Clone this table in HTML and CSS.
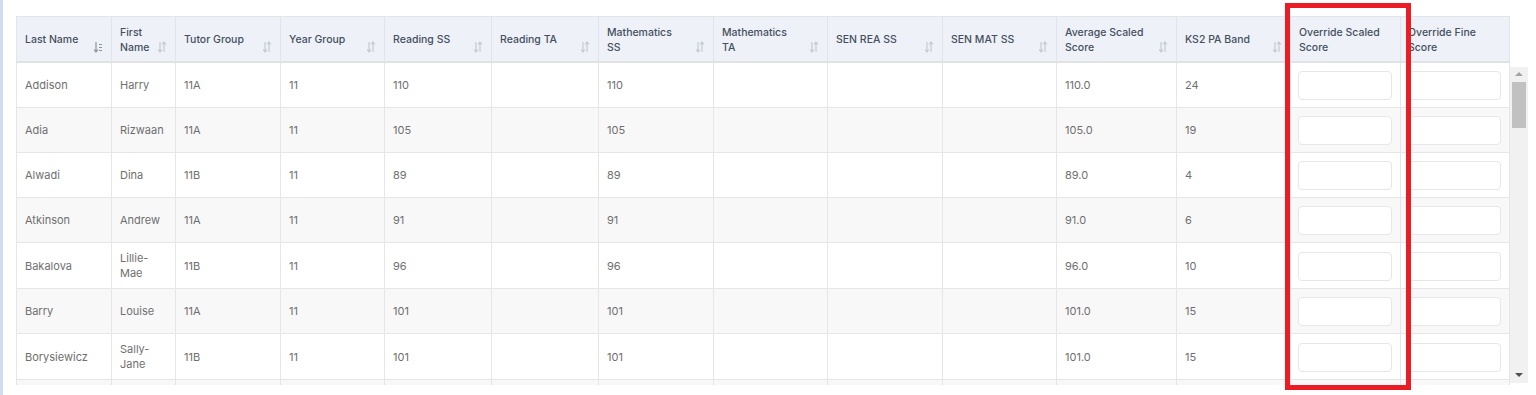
FILE: index.html
```html
<!DOCTYPE html>
<html lang="en">
<head>
<meta charset="utf-8">
<title>KS2 Scores</title>
<link rel="stylesheet" href="styles.css">
</head>
<body>
<div class="page">
  <div class="grid">
    <div class="head-row">
      <table class="tbl head">
        <colgroup>
          <col class="c-last"><col class="c-first"><col class="c-tutor"><col class="c-year"><col class="c-rss"><col class="c-rta"><col class="c-mss"><col class="c-mta"><col class="c-srea"><col class="c-smat"><col class="c-avg"><col class="c-band"><col class="c-ovs"><col class="c-ovf">
        </colgroup>
        <thead>
          <tr>
            <th><div class="th-in"><span>Last Name</span><svg class="sort" width="10" height="12" viewBox="0 0 10 12"><path d="M3 1v10M1 8.5l2 2.5 2-2.5" fill="none" stroke="#8e939b" stroke-width="1.2"/><path d="M6 3.5h3M6 6.5h3M6 9.5h3" fill="none" stroke="#8e939b" stroke-width="1.1"/></svg></div></th>
            <th><div class="th-in"><span>First Name</span><svg class="sort" width="10" height="12" viewBox="0 0 10 12"><path d="M3 1v10M1 8.5l2 2.5 2-2.5M7 11V1M5 3.5L7 1l2 2.5" fill="none" stroke="#c6cad1" stroke-width="1.2"/></svg></div></th>
            <th><div class="th-in"><span>Tutor Group</span><svg class="sort" width="10" height="12" viewBox="0 0 10 12"><path d="M3 1v10M1 8.5l2 2.5 2-2.5M7 11V1M5 3.5L7 1l2 2.5" fill="none" stroke="#c6cad1" stroke-width="1.2"/></svg></div></th>
            <th><div class="th-in"><span>Year Group</span><svg class="sort" width="10" height="12" viewBox="0 0 10 12"><path d="M3 1v10M1 8.5l2 2.5 2-2.5M7 11V1M5 3.5L7 1l2 2.5" fill="none" stroke="#c6cad1" stroke-width="1.2"/></svg></div></th>
            <th><div class="th-in"><span>Reading SS</span><svg class="sort" width="10" height="12" viewBox="0 0 10 12"><path d="M3 1v10M1 8.5l2 2.5 2-2.5M7 11V1M5 3.5L7 1l2 2.5" fill="none" stroke="#c6cad1" stroke-width="1.2"/></svg></div></th>
            <th><div class="th-in"><span>Reading TA</span><svg class="sort" width="10" height="12" viewBox="0 0 10 12"><path d="M3 1v10M1 8.5l2 2.5 2-2.5M7 11V1M5 3.5L7 1l2 2.5" fill="none" stroke="#c6cad1" stroke-width="1.2"/></svg></div></th>
            <th><div class="th-in"><span>Mathematics SS</span><svg class="sort" width="10" height="12" viewBox="0 0 10 12"><path d="M3 1v10M1 8.5l2 2.5 2-2.5M7 11V1M5 3.5L7 1l2 2.5" fill="none" stroke="#c6cad1" stroke-width="1.2"/></svg></div></th>
            <th><div class="th-in"><span>Mathematics TA</span><svg class="sort" width="10" height="12" viewBox="0 0 10 12"><path d="M3 1v10M1 8.5l2 2.5 2-2.5M7 11V1M5 3.5L7 1l2 2.5" fill="none" stroke="#c6cad1" stroke-width="1.2"/></svg></div></th>
            <th><div class="th-in"><span>SEN REA SS</span><svg class="sort" width="10" height="12" viewBox="0 0 10 12"><path d="M3 1v10M1 8.5l2 2.5 2-2.5M7 11V1M5 3.5L7 1l2 2.5" fill="none" stroke="#c6cad1" stroke-width="1.2"/></svg></div></th>
            <th><div class="th-in"><span>SEN MAT SS</span><svg class="sort" width="10" height="12" viewBox="0 0 10 12"><path d="M3 1v10M1 8.5l2 2.5 2-2.5M7 11V1M5 3.5L7 1l2 2.5" fill="none" stroke="#c6cad1" stroke-width="1.2"/></svg></div></th>
            <th><div class="th-in"><span>Average Scaled Score</span><svg class="sort" width="10" height="12" viewBox="0 0 10 12"><path d="M3 1v10M1 8.5l2 2.5 2-2.5M7 11V1M5 3.5L7 1l2 2.5" fill="none" stroke="#c6cad1" stroke-width="1.2"/></svg></div></th>
            <th><div class="th-in"><span>KS2 PA Band</span><svg class="sort" width="10" height="12" viewBox="0 0 10 12"><path d="M3 1v10M1 8.5l2 2.5 2-2.5M7 11V1M5 3.5L7 1l2 2.5" fill="none" stroke="#c6cad1" stroke-width="1.2"/></svg></div></th>
            <th class="th-ovs"><div class="th-in"><span>Override Scaled Score</span></div></th>
            <th class="th-ovf"><div class="th-in"><span>Override Fine Score</span></div></th>
          </tr>
        </thead>
      </table>
      <div class="head-gap"></div>
    </div>

    <div class="body-row">
      <div class="body-clip">
        <table class="tbl body">
          <colgroup>
            <col class="c-last"><col class="c-first"><col class="c-tutor"><col class="c-year"><col class="c-rss"><col class="c-rta"><col class="c-mss"><col class="c-mta"><col class="c-srea"><col class="c-smat"><col class="c-avg"><col class="c-band"><col class="c-ovs"><col class="c-ovf">
          </colgroup>
          <tbody>
            <tr>
              <td>Addison</td><td>Harry</td><td>11A</td><td>11</td><td>110</td><td></td><td>110</td><td></td><td></td><td></td><td>110.0</td><td>24</td>
              <td class="td-in"><input class="score-input" type="text"></td><td class="td-in td-ovf"><input class="score-input" type="text"></td>
            </tr>
            <tr>
              <td>Adia</td><td>Rizwaan</td><td>11A</td><td>11</td><td>105</td><td></td><td>105</td><td></td><td></td><td></td><td>105.0</td><td>19</td>
              <td class="td-in"><input class="score-input" type="text"></td><td class="td-in td-ovf"><input class="score-input" type="text"></td>
            </tr>
            <tr>
              <td>Alwadi</td><td>Dina</td><td>11B</td><td>11</td><td>89</td><td></td><td>89</td><td></td><td></td><td></td><td>89.0</td><td>4</td>
              <td class="td-in"><input class="score-input" type="text"></td><td class="td-in td-ovf"><input class="score-input" type="text"></td>
            </tr>
            <tr>
              <td>Atkinson</td><td>Andrew</td><td>11A</td><td>11</td><td>91</td><td></td><td>91</td><td></td><td></td><td></td><td>91.0</td><td>6</td>
              <td class="td-in"><input class="score-input" type="text"></td><td class="td-in td-ovf"><input class="score-input" type="text"></td>
            </tr>
            <tr>
              <td>Bakalova</td><td>Lillie-Mae</td><td>11B</td><td>11</td><td>96</td><td></td><td>96</td><td></td><td></td><td></td><td>96.0</td><td>10</td>
              <td class="td-in"><input class="score-input" type="text"></td><td class="td-in td-ovf"><input class="score-input" type="text"></td>
            </tr>
            <tr>
              <td>Barry</td><td>Louise</td><td>11A</td><td>11</td><td>101</td><td></td><td>101</td><td></td><td></td><td></td><td>101.0</td><td>15</td>
              <td class="td-in"><input class="score-input" type="text"></td><td class="td-in td-ovf"><input class="score-input" type="text"></td>
            </tr>
            <tr>
              <td>Borysiewicz</td><td>Sally-Jane</td><td>11B</td><td>11</td><td>101</td><td></td><td>101</td><td></td><td></td><td></td><td>101.0</td><td>15</td>
              <td class="td-in"><input class="score-input" type="text"></td><td class="td-in td-ovf"><input class="score-input" type="text"></td>
            </tr>
            <tr>
              <td></td><td></td><td></td><td></td><td></td><td></td><td></td><td></td><td></td><td></td><td></td><td></td>
              <td class="td-in"><input class="score-input" type="text"></td><td class="td-in td-ovf"><input class="score-input" type="text"></td>
            </tr>
          </tbody>
        </table>
      </div>
      <div class="vscroll">
        <div class="sb-btn sb-up"></div>
        <div class="sb-track"><div class="sb-thumb"></div></div>
        <div class="sb-btn sb-down"></div>
      </div>
    </div>
  </div>
  <div class="highlight"></div>
</div>
</body>
</html>
```

FILE: styles.css
```css
* { box-sizing: border-box; }

html, body {
  margin: 0;
  padding: 0;
  background: #ffffff;
  font-family: Inter, "Noto Sans", "Liberation Sans", sans-serif;
}

.page {
  position: relative;
  width: 1536px;
  height: 395px;
  overflow: hidden;
  border-left: 3px solid #d3dbee;
  padding: 16px 0 0 13px;
}

.grid {
  display: flex;
  flex-direction: column;
  width: 1512px;
}

.head-row {
  display: flex;
}

.head-gap {
  width: 18px;
  flex: none;
}

.tbl {
  width: 1494px;
  table-layout: fixed;
  border-collapse: separate;
  border-spacing: 0;
  flex: none;
}

.c-last { width: 96px; }
.c-first { width: 64px; }
.c-tutor { width: 105px; }
.c-year { width: 104px; }
.c-rss { width: 107px; }
.c-rta { width: 107px; }
.c-mss { width: 115px; }
.c-mta { width: 114px; }
.c-srea { width: 115px; }
.c-smat { width: 114px; }
.c-avg { width: 120px; }
.c-band { width: 114px; }
.c-ovs { width: 110px; }
.c-ovf { width: 109px; }

.head th {
  background: #eef2f8;
  height: 47px;
  padding: 7px 8px 6px 8px;
  border-top: 1px solid #e2e5ea;
  border-right: 1px solid #e1e4e9;
  border-bottom: 2px solid #e0e2e5;
  text-align: left;
  vertical-align: middle;
  font-size: 10.5px;
  line-height: 15px;
  font-weight: 500;
  color: #454f5e;
}

.head th:first-child {
  border-left: 1px solid #e2e5ea;
}

.head th.th-ovf {
  padding-left: 7px;
}

.th-in {
  display: flex;
  align-items: center;
  justify-content: space-between;
  gap: 12px;
  height: 31px;
}

.th-in span {
  flex: 1;
  min-width: 0;
}

.sort {
  flex: none;
  align-self: flex-end;
  margin-bottom: 2px;
}

.body-row {
  display: flex;
  height: 322px;
}

.body-clip {
  width: 1494px;
  height: 322px;
  overflow: hidden;
  flex: none;
}

.body td {
  height: 45px;
  padding: 8px 8px 7px 8px;
  border-right: 1px solid #e6e6e6;
  border-bottom: 1px solid #e6e6e6;
  vertical-align: middle;
  font-size: 11px;
  line-height: 15px;
  color: #6f6f6f;
  background: #ffffff;
}

.body tr:nth-child(even) td {
  background: #f8f8f8;
}

.body td:first-child {
  border-left: 1px solid #e6e6e6;
}

.body td.td-in {
  padding: 8px 8px 7px 7px;
}

.score-input {
  display: block;
  width: 100%;
  height: 29px;
  margin: 0;
  border: 1px solid #e7e7e7;
  border-radius: 4px;
  background: #ffffff;
  outline: none;
  font: inherit;
}

.vscroll {
  width: 18px;
  height: 316px;
  margin-top: 4px;
  background: #f1f1f1;
  display: flex;
  flex-direction: column;
  flex: none;
}

.sb-btn {
  height: 14px;
  display: flex;
  align-items: center;
  justify-content: center;
  flex: none;
}

.sb-up::before {
  content: "";
  border-left: 4px solid transparent;
  border-right: 4px solid transparent;
  border-bottom: 4px solid #a3a3a3;
}

.sb-down {
  height: 16px;
}

.sb-down::before {
  content: "";
  border-left: 4px solid transparent;
  border-right: 4px solid transparent;
  border-top: 4px solid #505050;
}

.sb-track {
  flex: 1;
  padding: 1px 2px 0 2px;
}

.sb-thumb {
  height: 46px;
  background: #c1c1c1;
}

.highlight {
  position: absolute;
  left: 1282px;
  top: 3px;
  width: 126px;
  height: 387px;
  border: 5px solid #ec1c24;
}
```
